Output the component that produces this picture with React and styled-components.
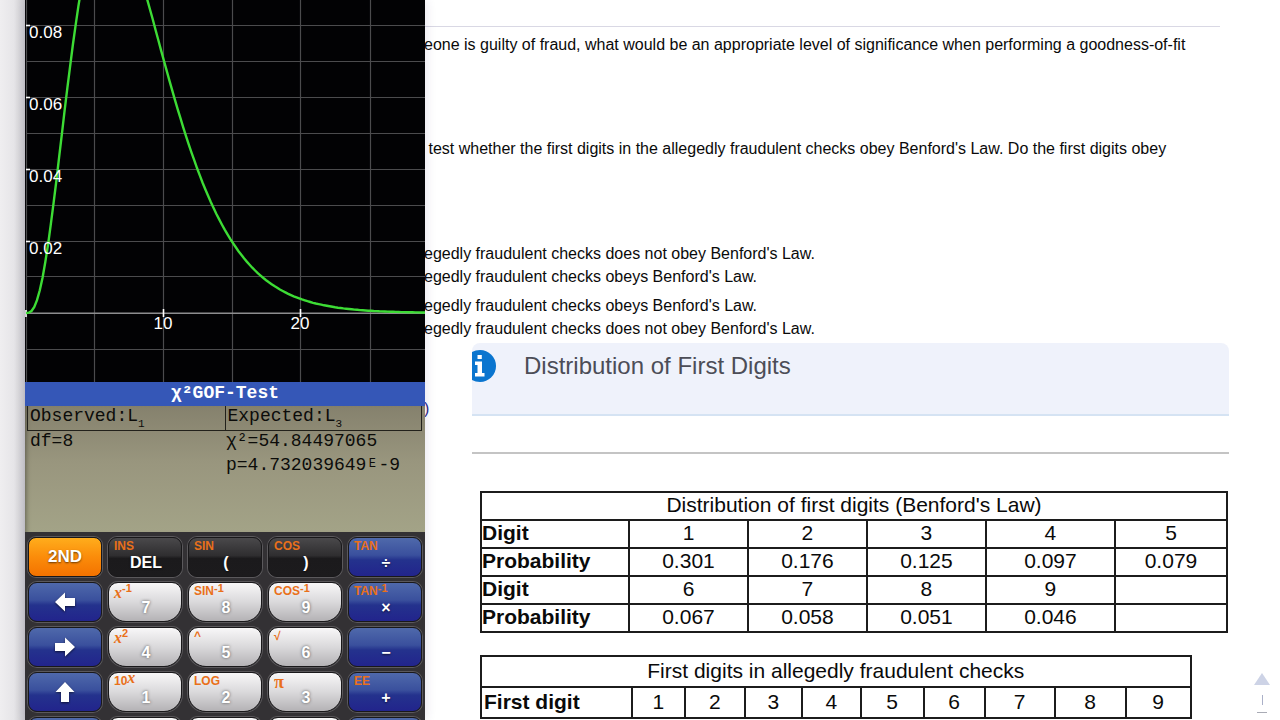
import React from "react";
import styled, { createGlobalStyle, css } from "styled-components";

const Global = createGlobalStyle`
  *, *::before, *::after { box-sizing: border-box; }
  body {
    margin: 0;
    background: #fff;
    color: #0a0a0a;
    font-family: "Liberation Sans", Arial, sans-serif;
  }
`;

const Page = styled.div`
  display: flex;
  height: 100vh;
  overflow: hidden;
  background: #fff;
`;

const Gutter = styled.div`
  flex: 0 0 25px;
  background: linear-gradient(90deg, #efeef0 0%, #e6e5e8 55%, #c6c5c9 100%);
`;

/* ---------- Calculator ---------- */

const Calculator = styled.section`
  position: relative;
  z-index: 1;
  flex: 0 0 400px;
  display: flex;
  flex-direction: column;
  background: #333134;
  box-shadow: 1px 0 10px rgba(60, 40, 110, 0.12);
`;

const Graph = styled.svg`
  display: block;
  flex: none;
  width: 100%;
  height: 382px;
  background: #020204;
  font-family: "Liberation Sans", Arial, sans-serif;
  font-size: 17px;
`;

const ScreenTitle = styled.h2`
  flex: none;
  margin: 0;
  height: 24px;
  background: #3557b7;
  color: #fff;
  font: 700 18px/22px "Liberation Mono", monospace;
  text-align: center;
`;

const Screen = styled.div`
  flex: none;
  height: 126px;
  padding: 0 3px 0 2px;
  background: linear-gradient(#85816d 0%, #99967e 45%, #a3a387 100%);
  box-shadow: inset 5px 0 5px -4px rgba(0, 0, 0, 0.4);
  color: #0c0c0a;
  font: 400 18px/24px "Liberation Mono", monospace;
`;

const Sources = styled.div`
  display: grid;
  grid-template-columns: 1fr 1fr;
  height: 25px;
  border: 1px solid #22211b;
  border-top: 0;
  line-height: 20px;
`;

const Source = styled.span`
  padding-left: 2px;
  & + & { border-left: 1px solid #22211b; }
`;

const Sub = styled.sub`
  font-size: 11px;
  line-height: 0;
  vertical-align: -6px;
`;

const Results = styled.div`
  display: grid;
  grid-template-columns: 1fr 1fr;
  padding-left: 3px;
`;

const Result = styled.span`
  height: 24px;
  line-height: 20px;
  white-space: nowrap;
`;

const Exp = styled.span`
  display: inline-block;
  width: 12px;
  font-size: 12px;
  line-height: 12px;
  text-align: center;
  vertical-align: 3px;
`;

const Keypad = styled.div`
  display: grid;
  grid-template-columns: repeat(5, 1fr);
  grid-auto-rows: 40px;
  gap: 5px 6px;
  padding: 5px 3px;
`;

const tones = {
  orange: css`
    background: linear-gradient(#ffad1c 0%, #fb8c0a 50%, #f37200 100%);
    border-radius: 8px;
  `,
  black: css`
    background: linear-gradient(#4a494b 0%, #2f2e30 46%, #1b1a1c 54%, #1c1b1d 100%);
    border-radius: 9px;
  `,
  blue: css`
    background: linear-gradient(#4f69ab 0%, #3a509d 45%, #24328d 58%, #22248c 100%);
    border-radius: 9px;
  `,
  white: css`
    background: linear-gradient(#f8f7f8 0%, #dad9db 50%, #b4b2b5 100%);
    border-radius: 10px 10px 18px 18px;
  `,
};

const KeyButton = styled.button`
  display: flex;
  flex-direction: column;
  align-items: stretch;
  justify-content: ${(p) => (p.$centered ? "center" : "flex-start")};
  margin: 0;
  padding: 0;
  border: 1px solid #19181a;
  ${(p) => tones[p.$tone]}
  box-shadow: 0 0 0 1px #5b595c;
  color: #fff;
  font: 700 16px/20px "Liberation Sans", Arial, sans-serif;
  text-align: center;
  text-shadow: ${(p) =>
    p.$tone === "white" ? "0 0 3px rgba(50, 50, 50, 0.8)" : "0 1px 2px rgba(0, 0, 0, 0.6)"};
`;

const KeyAlt = styled.span`
  height: 15px;
  padding-left: 5px;
  color: #e9701a;
  font-size: 12px;
  line-height: 17px;
  text-align: left;
  text-shadow: none;
  white-space: nowrap;
  sup { font-size: 11px; line-height: 0; vertical-align: 3px; }
  i { font: italic 700 16px/0 "Liberation Serif", serif; vertical-align: -3px; }
  sup i { vertical-align: -1px; }
  b { font: 700 18px/0 "Liberation Serif", serif; vertical-align: -3px; }
`;

const KeyMain = styled.span`
  display: block;
  padding-left: 2px;
`;

const BigMain = styled.span`
  font-size: 17px;
`;

const ArrowIcon = styled.svg`
  display: block;
  margin: 0 auto;
  fill: #fff;
  filter: drop-shadow(0 1px 1px rgba(0, 0, 0, 0.6));
`;

/* ---------- Worksheet ---------- */

const Worksheet = styled.main`
  flex: 1 1 0;
  min-width: 0;
  margin-left: -1px;
  padding: 26px 51px 0 0;
`;

const Rule = styled.hr`
  margin: 0 9px 0 0;
  border: 0;
  border-top: 1px solid #d9d8e4;
`;

const Question = styled.p`
  margin: 0;
  padding-top: ${(p) => p.$space}px;
  font-size: 16px;
  line-height: 23px;
  white-space: pre;
`;

const Answer = styled.div`
  display: grid;
  grid-template-columns: 48px 1fr;
  margin-top: 3px;
`;

const Fragment = styled.span`
  padding-top: 56px;
  color: #2c2a8a;
  font-size: 16px;
  line-height: 20px;
`;

const Banner = styled.header`
  display: flex;
  align-items: flex-start;
  height: 73px;
  padding-top: 7px;
  gap: 28px;
  border-bottom: 2px solid #d5e3f3;
  border-radius: 8px 8px 0 0;
  background: #eff2fb;
`;

const BannerTitle = styled.h1`
  margin: 0;
  color: #4c4d57;
  font-size: 24px;
  font-weight: 400;
  line-height: 32px;
`;

const Divider = styled.hr`
  margin: 36px 0 37px;
  border: 0;
  border-top: 2px solid #c4c4c4;
`;

const Table = styled.table`
  width: ${(p) => p.$width};
  margin: 0 0 22px 8px;
  border-collapse: collapse;
  table-layout: fixed;
  font-size: 21px;
  line-height: 24px;
  text-align: center;
`;

const Row = styled.tr`
  height: ${(p) => p.$height}px;
`;

const Cell = styled.td`
  padding: 0 0 2px;
  border: 2px solid #1c1c1c;
`;

const Head = styled.th`
  padding: 0 0 2px ${(p) => p.$inset || 0}px;
  border: 2px solid #1c1c1c;
  font-weight: ${(p) => (p.$plain ? 400 : 700)};
  text-align: ${(p) => (p.$plain ? "center" : "left")};
`;

const Scroller = styled.nav`
  position: absolute;
  right: 9px;
  bottom: 5px;
  display: flex;
  flex-direction: column;
  align-items: center;
`;

/* ---------- Data ---------- */

const UNIT_X = 13.8;
const UNIT_Y = 3590;
const BASE_Y = 313;

const density = (x) => (x ** 3 * Math.exp(-x / 2)) / 96;

const curve = Array.from({ length: 146 }, (_, i) => i * 0.2)
  .map((x) => `${(1 + x * UNIT_X).toFixed(1)},${(BASE_Y - density(x) * UNIT_Y).toFixed(1)}`)
  .join(" ");

const gridX = [1, 69, 138, 207, 275, 345];
const gridY = [25, 61, 97, 133, 169, 205, 241, 276, 349];
const labelsY = [
  ["0.08", 25],
  ["0.06", 97],
  ["0.04", 169],
  ["0.02", 241],
];

const ARROW = "M0 10 L10 0.500 V6 H20 V14 H10 V19.500 Z";
const Arrow = ({ turn }) => (
  <ArrowIcon width="22" height="22" viewBox="-1 -1 22 22" aria-hidden="true">
    <path d={ARROW} transform={`rotate(${turn} 10 10)`} />
  </ArrowIcon>
);

const keys = [
  { tone: "orange", name: "Second", icon: <BigMain>2ND</BigMain> },
  { tone: "black", alt: "INS", main: "DEL" },
  { tone: "black", alt: "SIN", main: "(" },
  { tone: "black", alt: "COS", main: ")" },
  { tone: "blue", alt: "TAN", main: "÷" },
  { tone: "blue", name: "Left", icon: <Arrow turn={0} /> },
  { tone: "white", alt: <><i>x</i><sup>-1</sup></>, main: "7" },
  { tone: "white", alt: <>SIN<sup>-1</sup></>, main: "8" },
  { tone: "white", alt: <>COS<sup>-1</sup></>, main: "9" },
  { tone: "blue", alt: <>TAN<sup>-1</sup></>, main: "×" },
  { tone: "blue", name: "Right", icon: <Arrow turn={180} /> },
  { tone: "white", alt: <><i>x</i><sup>2</sup></>, main: "4" },
  { tone: "white", alt: "^", main: "5" },
  { tone: "white", alt: "√", main: "6" },
  { tone: "blue", alt: "", main: "−" },
  { tone: "blue", name: "Up", icon: <Arrow turn={90} /> },
  { tone: "white", alt: <>10<sup><i>x</i></sup></>, main: "1" },
  { tone: "white", alt: "LOG", main: "2" },
  { tone: "white", alt: <b>π</b>, main: "3" },
  { tone: "blue", alt: "EE", main: "+" },
  { tone: "blue", name: "Down" },
  { tone: "white", name: "Zero" },
  { tone: "white", name: "Decimal point" },
  { tone: "white", name: "Negate" },
  { tone: "blue", name: "Enter" },
];

const questions = [
  [6, "eone is guilty of fraud, what would be an appropriate level of significance when performing a goodness-of-fit"],
  [81, " test whether the first digits in the allegedly fraudulent checks obey Benford's Law. Do the first digits obey"],
  [82, "egedly fraudulent checks does not obey Benford's Law."],
  [0, "egedly fraudulent checks obeys Benford's Law."],
  [6, "egedly fraudulent checks obeys Benford's Law."],
  [0, "egedly fraudulent checks does not obey Benford's Law."],
];

const lawRows = [
  ["Digit", "1", "2", "3", "4", "5"],
  ["Probability", "0.301", "0.176", "0.125", "0.097", "0.079"],
  ["Digit", "6", "7", "8", "9", ""],
  ["Probability", "0.067", "0.058", "0.051", "0.046", ""],
];
const lawCols = [148, 119, 119, 119, 129, 112];
const checkCols = [151, 53, 60, 57, 59, 63, 61, 70, 71, 65];

const Columns = ({ widths }) => {
  const total = widths.reduce((sum, w) => sum + w, 0);
  return (
    <colgroup>
      {widths.map((w, i) => (
        <col key={i} style={{ width: `${(w / total) * 100}%` }} />
      ))}
    </colgroup>
  );
};

export default function App() {
  return (
    <Page>
      <Global />
      <Gutter />
      <Calculator>
        <Graph viewBox="0 0 400 382" preserveAspectRatio="none">
          <g stroke="#4b4b4d" strokeWidth="1.2">
            {gridX.map((x) => <line key={x} x1={x + 0.5} x2={x + 0.5} y1="0" y2="382" />)}
            {gridY.map((y) => <line key={y} y1={y + 0.5} y2={y + 0.5} x1="1" x2="400" />)}
          </g>
          <line x1="1" x2="400" y1="313.2" y2="313.2" stroke="#8d8d8f" strokeWidth="1.4" />
          <g stroke="#fff" strokeWidth="1.6">
            {labelsY.map(([t, y]) => <line key={t} x1="1" x2="5" y1={y + 0.5} y2={y + 0.5} />)}
            <line x1="1" x2="1" y1="310" y2="317" />
            <line x1="138.5" x2="138.5" y1="309" y2="317" />
            <line x1="275.5" x2="275.5" y1="309" y2="317" />
          </g>
          <polyline points={curve} fill="none" stroke="#3ddc35" strokeWidth="2.4" />
          <g fill="#fff">
            {labelsY.map(([t, y]) => <text key={t} x="4" y={y + 13}>{t}</text>)}
            <text x="138" y="329" textAnchor="middle">10</text>
            <text x="275" y="329" textAnchor="middle">20</text>
          </g>
        </Graph>
        <ScreenTitle>χ²GOF-Test</ScreenTitle>
        <Screen>
          <Sources>
            <Source>Observed:L<Sub>1</Sub></Source>
            <Source>Expected:L<Sub>3</Sub></Source>
          </Sources>
          <Results>
            <Result>df=8</Result>
            <Result>χ²=54.84497065</Result>
            <Result />
            <Result>p=4.732039649<Exp>E</Exp>-9</Result>
          </Results>
        </Screen>
        <Keypad>
          {keys.map((k, i) => (
            <KeyButton key={i} type="button" $tone={k.tone} $centered={!!k.icon} aria-label={k.name}>
              {k.icon || (
                <>
                  <KeyAlt>{k.alt}</KeyAlt>
                  <KeyMain>{k.main}</KeyMain>
                </>
              )}
            </KeyButton>
          ))}
        </Keypad>
      </Calculator>

      <Worksheet>
        <Rule />
        {questions.map(([space, text], i) => (
          <Question key={i} $space={space}>{text}</Question>
        ))}
        <Answer>
          <Fragment>)</Fragment>
          <div>
            <Banner>
              <svg width="24" height="32" viewBox="0 0 24 32" aria-hidden="true">
                <circle cx="8" cy="16" r="16" fill="#0a75cf" />
                <path d="M5.500 5 H9.800 V9 H5.500 Z" fill="#fff" />
                <path d="M3 11.500 H10 V23 H12.500 V26.500 H3 V23 H5.500 V15 H3 Z" fill="#fff" />
              </svg>
              <BannerTitle>Distribution of First Digits</BannerTitle>
            </Banner>
            <Divider />
            <Table $width="calc(100% - 9px)">
              <Columns widths={lawCols} />
              <thead>
                <Row $height={28}>
                  <Head $plain colSpan={6}>Distribution of first digits (Benford's Law)</Head>
                </Row>
              </thead>
              <tbody>
                {lawRows.map(([label, ...values], r) => (
                  <Row key={r} $height={28}>
                    <Head scope="row">{label}</Head>
                    {values.map((v, c) => <Cell key={c}>{v}</Cell>)}
                  </Row>
                ))}
              </tbody>
            </Table>
            <Table $width="94%">
              <Columns widths={checkCols} />
              <thead>
                <Row $height={31}>
                  <Head $plain colSpan={10}>First digits in allegedly fraudulent checks</Head>
                </Row>
              </thead>
              <tbody>
                <Row $height={31}>
                  <Head scope="row" $inset={2}>First digit</Head>
                  {[1, 2, 3, 4, 5, 6, 7, 8, 9].map((n) => <Cell key={n}>{n}</Cell>)}
                </Row>
              </tbody>
            </Table>
          </div>
        </Answer>
      </Worksheet>

      <Scroller aria-label="Scroll">
        <svg width="18" height="42" viewBox="0 0 18 42" aria-hidden="true">
          <path d="M9 0 L17 12 H1 Z" fill="#cdd3e6" />
          <path d="M9.500 22 V32" stroke="#aab0c8" strokeWidth="1" />
          <path d="M4 39.500 H14" stroke="#a9abb5" strokeWidth="1" />
        </svg>
      </Scroller>
    </Page>
  );
}
